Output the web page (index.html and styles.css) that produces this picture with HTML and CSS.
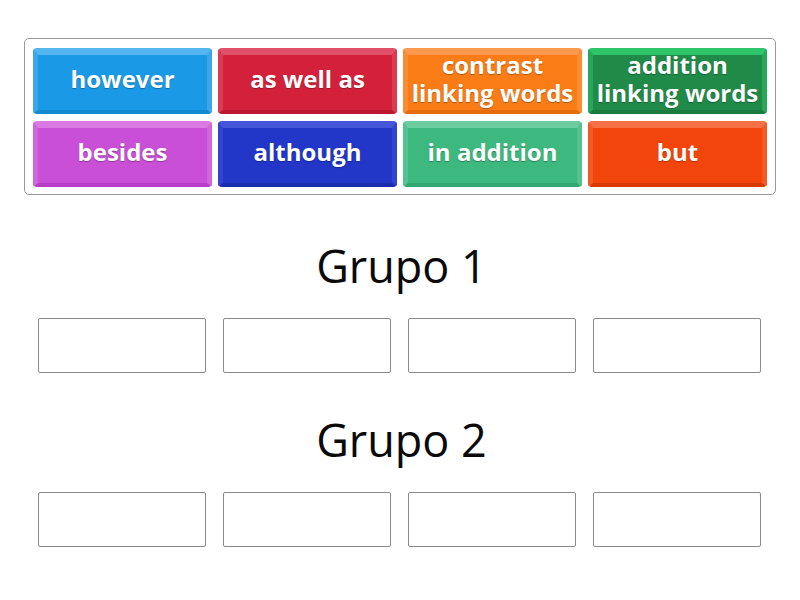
FILE: index.html
```html
<!DOCTYPE html>
<html>
<head>
<meta charset="utf-8">
<link rel="stylesheet" href="styles.css">
</head>
<body>
<div class="page">
  <div class="bank">
    <div class="tile c-blue">however</div>
    <div class="tile c-red">as well as</div>
    <div class="tile c-orange">contrast linking words</div>
    <div class="tile c-green">addition linking words</div>
    <div class="tile c-purple">besides</div>
    <div class="tile c-navy">although</div>
    <div class="tile c-teal">in addition</div>
    <div class="tile c-flame">but</div>
  </div>
  <div class="group">
    <div class="group-title">Grupo 1</div>
    <div class="slots">
      <div class="slot"></div><div class="slot"></div><div class="slot"></div><div class="slot"></div>
    </div>
  </div>
  <div class="group">
    <div class="group-title">Grupo 2</div>
    <div class="slots">
      <div class="slot"></div><div class="slot"></div><div class="slot"></div><div class="slot"></div>
    </div>
  </div>
</div>
</body>
</html>
```
FILE: styles.css
```css
* { box-sizing: border-box; }
html, body { margin: 0; padding: 0; background: #fff; }
body { font-family: "Open Sans", "Noto Sans", sans-serif; width: 800px; height: 600px; overflow: hidden; }
.page { padding: 38px 24px 0 24px; }
.bank {
  border: 1px solid #9a9a9a;
  border-radius: 5px;
  padding: 9px 8px 7px 8px;
  display: grid;
  grid-template-columns: repeat(4, 179px);
  grid-auto-rows: 66px;
  column-gap: 6px;
  row-gap: 7px;
  height: 157px;
}
.tile {
  border-radius: 4px;
  color: #fff;
  font-weight: 700;
  font-size: 24px;
  line-height: 28px;
  text-align: center;
  display: flex;
  align-items: center;
  justify-content: center;
  padding: 0 0 8px 0;
  border-style: solid;
  border-width: 7px 5px 4px 5px;
  text-shadow: 0 1px 1px rgba(0,0,0,0.3);
}
.c-blue   { background: #1a9ae6; border-color: #55b5ef #3aa7ea #1289d1 #3aa7ea; }
.c-red    { background: #d3203b; border-color: #e05068 #da3a52 #bd1630 #da3a52; }
.c-orange { background: #fa7c17; border-color: #fb9a4f #fb8c34 #e56c0d #fb8c34; }
.c-green  { background: #208b49; border-color: #2ec56a #27a858 #1b7a3f #27a858; }
.c-purple { background: #c84fd6; border-color: #d97be3 #d066dd #b83ec7 #d066dd; }
.c-navy   { background: #2236c8; border-color: #4656d8 #3344d0 #1a2cb0 #3344d0; }
.c-teal   { background: #3db87e; border-color: #6dcc9f #55c28f #31a66f #55c28f; }
.c-flame  { background: #f2450c; border-color: #f67145 #f45a26 #d93a05 #f45a26; }
.group { margin-top: 41px; }
.group + .group { margin-top: 37px; }
.group-title {
  text-align: center;
  font-size: 45px;
  line-height: 60px;
  color: #0a0a0a;
  font-weight: 400;
  padding-left: 3px;
}
.slots {
  display: flex;
  gap: 17px;
  padding: 0 14px;
  margin-top: 22px;
}
.slot {
  width: 168px;
  height: 55px;
  border: 1px solid #8a8a8a;
  border-radius: 2px;
}
```
